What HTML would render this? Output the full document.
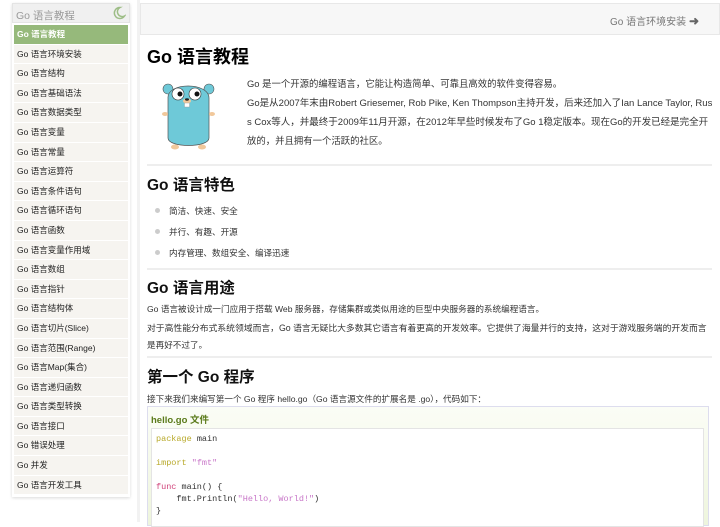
<!DOCTYPE html>
<html><head><meta charset="utf-8"><style>
*{margin:0;padding:0;box-sizing:border-box}
body{width:720px;height:522px;overflow:hidden;background:#fff;font-family:"Liberation Sans","Noto Sans CJK SC",sans-serif;color:#333;position:relative}
.side{position:absolute;left:12px;top:3px;width:118px;height:494px;background:#fff;box-shadow:0 1px 3px rgba(0,0,0,.15)}
.search{height:20px;background:#f0f0f0;border:1px solid #e4e4e4;font-size:10.5px;color:#999;padding:4px 3px;position:relative}
.menu{position:absolute;left:2px;top:22px;width:114px}
.menu div{height:19.6px;line-height:19.6px;font-size:8.5px;padding-left:3px;background:#f6f4f0;border-bottom:1px solid #fff;color:#222;white-space:nowrap}
.menu div.on{background:#96b97b;color:#fff;font-weight:bold}
.vline{position:absolute;left:137px;top:0;width:3px;height:522px;background:#f2f2f2}
.top{position:absolute;left:140px;top:3px;width:580px;height:32px;background:#f7f7f7;border:1px solid #e8e8e8;font-size:10px;color:#777;text-align:right;padding:9px 20px 0 0}
.main{position:absolute;left:147px;top:0;width:565px}
h1{position:absolute;top:43px;font-size:18px;color:#000}
h2{position:absolute;font-size:15.5px;color:#111;left:0}
p,.t{position:absolute;font-size:8.6px;color:#333;white-space:nowrap}
.hr{position:absolute;left:0;width:565px;height:2px;background:#eee}
.b{position:absolute;left:8px;width:5px;height:5px;border-radius:50%;background:#ccc}
.code{position:absolute;left:0;top:406px;width:562px;height:120px;border:1px solid #dde;background:linear-gradient(#fbfdf6,#eef5dd);}
.code .ti{font-size:9.5px;font-weight:bold;color:#5a7a1a;padding:5px 0 0 3px}
.code pre{position:absolute;left:3px;top:21px;right:4px;bottom:-2px;background:#fff;border:1px solid #e4e4e4;font-family:"Liberation Mono",monospace;font-size:8.5px;line-height:12px;padding:4px 4px;color:#333}
.k{color:#b8a92a}.s{color:#c876c8}.f{color:#d0437a}
.i{font-size:9.4px}
</style></head><body>
<div class="side">
<div class="search">Go 语言教程<svg style="position:absolute;right:3px;top:2px" width="14" height="14" viewBox="0 0 14 14"><path d="M8 1.5A5.5 5.5 0 1 0 12.5 10 4.5 4.5 0 0 1 8 1.5z" fill="none" stroke="#9dbd86" stroke-width="1.5"/></svg></div>
<div class="menu">
<div class="on">Go 语言教程</div><div>Go 语言环境安装</div><div>Go 语言结构</div><div>Go 语言基础语法</div><div>Go 语言数据类型</div><div>Go 语言变量</div><div>Go 语言常量</div><div>Go 语言运算符</div><div>Go 语言条件语句</div><div>Go 语言循环语句</div><div>Go 语言函数</div><div>Go 语言变量作用域</div><div>Go 语言数组</div><div>Go 语言指针</div><div>Go 语言结构体</div><div>Go 语言切片(Slice)</div><div>Go 语言范围(Range)</div><div>Go 语言Map(集合)</div><div>Go 语言递归函数</div><div>Go 语言类型转换</div><div>Go 语言接口</div><div>Go 错误处理</div><div>Go 并发</div><div>Go 语言开发工具</div>
</div></div>
<div class="vline"></div>
<div class="top">Go 语言环境安装 <b style="color:#666;font-size:12px">➜</b></div>
<div class="main">
<h1>Go 语言教程</h1>
<svg style="position:absolute;left:14px;top:76px" width="56" height="75" viewBox="0 0 56 75">
<ellipse cx="7" cy="13" rx="5" ry="5" fill="#6ec9d8" stroke="#555" stroke-width=".6"/>
<ellipse cx="48" cy="13" rx="5" ry="5" fill="#6ec9d8" stroke="#555" stroke-width=".6"/>
<path d="M7 22C6 6 48 6 48 22L48 62C48 72 7 72 7 62Z" fill="#6ec9d8" stroke="#555" stroke-width=".7"/>
<circle cx="17" cy="18" r="6" fill="#fff" stroke="#333" stroke-width=".6"/><circle cx="19" cy="18" r="2.5" fill="#111"/>
<circle cx="34" cy="18" r="6" fill="#fff" stroke="#333" stroke-width=".6"/><circle cx="36" cy="18" r="2.5" fill="#111"/>
<ellipse cx="26" cy="25" rx="4" ry="2.5" fill="#f1c89b"/><ellipse cx="26" cy="23.5" rx="2" ry="1.2" fill="#222"/>
<rect x="23.5" y="27" width="5" height="4" fill="#fff" stroke="#999" stroke-width=".4"/>
<ellipse cx="4" cy="38" rx="3" ry="2" fill="#f1c89b"/><ellipse cx="51" cy="38" rx="3" ry="2" fill="#f1c89b"/>
<ellipse cx="14" cy="71" rx="4" ry="2.5" fill="#f1c89b"/><ellipse cx="41" cy="71" rx="4" ry="2.5" fill="#f1c89b"/>
</svg>
<p class="i" style="left:100px;top:76px">Go 是一个开源的编程语言，它能让构造简单、可靠且高效的软件变得容易。</p>
<p class="i" style="left:100px;top:95px;font-size:9.5px">Go是从2007年末由Robert Griesemer, Rob Pike, Ken Thompson主持开发，后来还加入了Ian Lance Taylor, Rus</p>
<p class="i" style="left:100px;top:114px;font-size:9.5px">s Cox等人，并最终于2009年11月开源，在2012年早些时候发布了Go 1稳定版本。现在Go的开发已经是完全开</p>
<p class="i" style="left:100px;top:133px">放的，并且拥有一个活跃的社区。</p>
<div class="hr" style="top:164px"></div>
<h2 style="top:173px">Go 语言特色</h2>
<div class="b" style="top:208px"></div><p style="left:22px;top:205px">简洁、快速、安全</p>
<div class="b" style="top:229px"></div><p style="left:22px;top:226px">并行、有趣、开源</p>
<div class="b" style="top:250px"></div><p style="left:22px;top:247px">内存管理、数组安全、编译迅速</p>
<div class="hr" style="top:268px"></div>
<h2 style="top:276px">Go 语言用途</h2>
<p style="left:0;top:303px">Go 语言被设计成一门应用于搭载 Web 服务器，存储集群或类似用途的巨型中央服务器的系统编程语言。</p>
<p style="left:0;top:321px;font-size:8.8px">对于高性能分布式系统领域而言，Go 语言无疑比大多数其它语言有着更高的开发效率。它提供了海量并行的支持，这对于游戏服务端的开发而言</p>
<p style="left:0;top:339px">是再好不过了。</p>
<div class="hr" style="top:356px"></div>
<h2 style="top:365px">第一个 Go 程序</h2>
<p style="left:0;top:393px">接下来我们来编写第一个 Go 程序 hello.go（Go 语言源文件的扩展名是 .go），代码如下：</p>
<div class="code"><div class="ti">hello.go 文件</div>
<pre><span class="k">package</span> main

<span class="k">import</span> <span class="s">"fmt"</span>

<span class="f">func</span> main() {
    fmt.Println(<span class="s">"Hello, World!"</span>)
}</pre></div>
</div>
</body></html>
